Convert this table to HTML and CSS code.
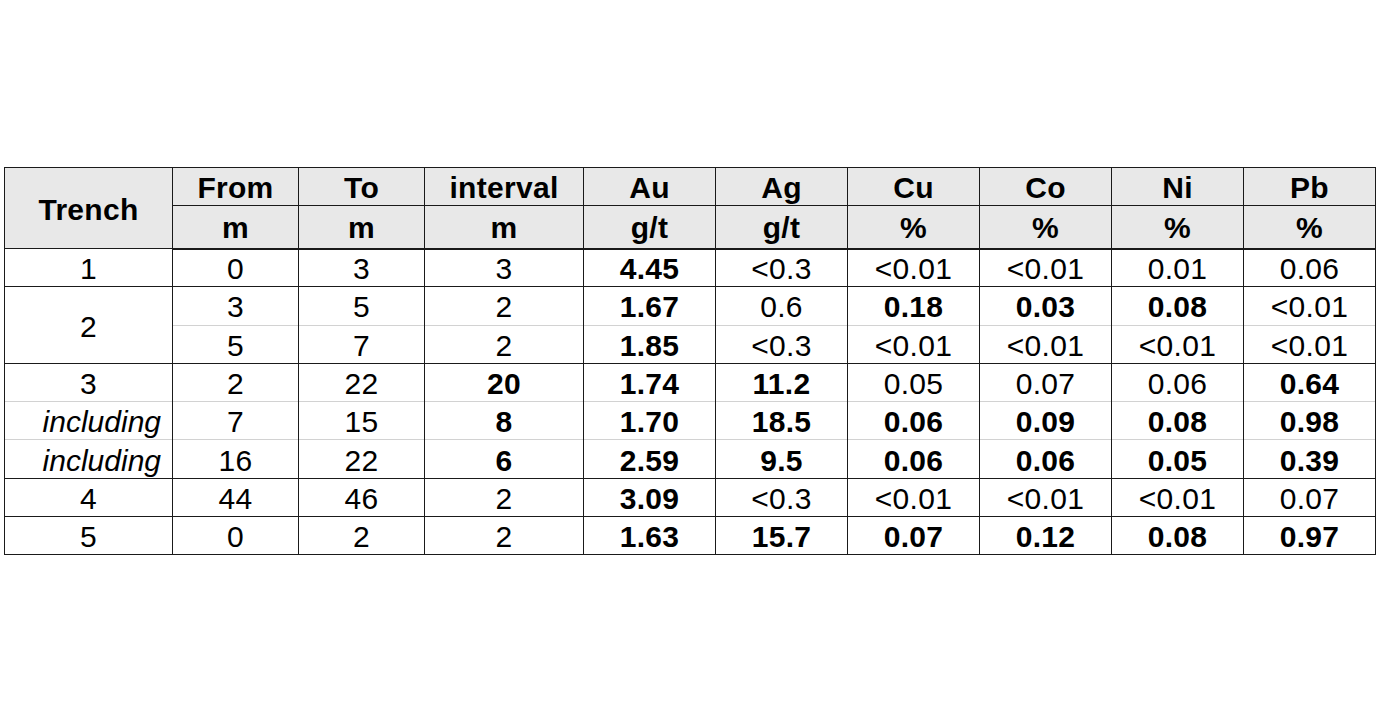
FILE: index.html
```html
<!DOCTYPE html>
<html>
<head>
<meta charset="utf-8">
<link rel="stylesheet" href="styles.css">
</head>
<body>
<div class="page">
<table class="assay">
  <colgroup>
    <col class="c-trench">
    <col class="c-narrow">
    <col class="c-narrow">
    <col class="c-interval">
    <col class="c-val">
    <col class="c-val">
    <col class="c-val">
    <col class="c-val">
    <col class="c-val">
    <col class="c-val">
  </colgroup>
  <thead>
    <tr class="h1">
      <th rowspan="2" class="trench-h">Trench</th>
      <th>From</th><th>To</th><th>interval</th><th>Au</th><th>Ag</th><th>Cu</th><th>Co</th><th>Ni</th><th>Pb</th>
    </tr>
    <tr class="h2">
      <th>m</th><th>m</th><th>m</th><th>g/t</th><th>g/t</th><th>%</th><th>%</th><th>%</th><th>%</th>
    </tr>
  </thead>
  <tbody>
    <tr class="row grp">
      <td>1</td><td>0</td><td>3</td><td>3</td><td class="b">4.45</td><td>&lt;0.3</td><td>&lt;0.01</td><td>&lt;0.01</td><td>0.01</td><td>0.06</td>
    </tr>
    <tr class="row grp">
      <td rowspan="2">2</td><td>3</td><td>5</td><td>2</td><td class="b">1.67</td><td>0.6</td><td class="b">0.18</td><td class="b">0.03</td><td class="b">0.08</td><td>&lt;0.01</td>
    </tr>
    <tr class="row sub">
      <td>5</td><td>7</td><td>2</td><td class="b">1.85</td><td>&lt;0.3</td><td>&lt;0.01</td><td>&lt;0.01</td><td>&lt;0.01</td><td>&lt;0.01</td>
    </tr>
    <tr class="row grp">
      <td>3</td><td>2</td><td>22</td><td class="b">20</td><td class="b">1.74</td><td class="b">11.2</td><td>0.05</td><td>0.07</td><td>0.06</td><td class="b">0.64</td>
    </tr>
    <tr class="row sub">
      <td class="incl">including</td><td>7</td><td>15</td><td class="b">8</td><td class="b">1.70</td><td class="b">18.5</td><td class="b">0.06</td><td class="b">0.09</td><td class="b">0.08</td><td class="b">0.98</td>
    </tr>
    <tr class="row sub">
      <td class="incl">including</td><td>16</td><td>22</td><td class="b">6</td><td class="b">2.59</td><td class="b">9.5</td><td class="b">0.06</td><td class="b">0.06</td><td class="b">0.05</td><td class="b">0.39</td>
    </tr>
    <tr class="row grp">
      <td>4</td><td>44</td><td>46</td><td>2</td><td class="b">3.09</td><td>&lt;0.3</td><td>&lt;0.01</td><td>&lt;0.01</td><td>&lt;0.01</td><td>0.07</td>
    </tr>
    <tr class="row grp">
      <td>5</td><td>0</td><td>2</td><td>2</td><td class="b">1.63</td><td class="b">15.7</td><td class="b">0.07</td><td class="b">0.12</td><td class="b">0.08</td><td class="b">0.97</td>
    </tr>
  </tbody>
</table>
</div>
</body>
</html>
```

FILE: styles.css
```css
html, body {
  margin: 0;
  padding: 0;
  background: #ffffff;
}

.page {
  padding: 167px 0 0 4px;
}

.assay {
  border-collapse: collapse;
  table-layout: fixed;
  width: 1372px;
  font-family: "Liberation Sans", Arial, sans-serif;
  font-size: 30px;
  color: #000;
  border: 1px solid #1a1a1a;
}

.c-trench { width: 168px; }
.c-narrow { width: 126px; }
.c-interval { width: 159px; }
.c-val { width: 132px; }

.assay th,
.assay td {
  border-left: 1px solid #1a1a1a;
  border-right: 1px solid #1a1a1a;
  padding: 3px 0 0 0;
  text-align: center;
  vertical-align: middle;
  line-height: 1;
  letter-spacing: 0.3px;
}

.assay th {
  background: #e8e8e8;
  font-weight: bold;
}

.h1 { height: 38px; }
.h1 th { border-bottom: 1px solid #1a1a1a; }
.h2 { height: 43px; }
.h2 th, .trench-h { border-bottom: 2px solid #1a1a1a; }

.row { height: 38.3px; }
.row.grp td { border-top: 1px solid #1a1a1a; }
.row.sub td { border-top: 1px solid #d2d2d2; }

.b { font-weight: bold; }

.assay td.incl {
  font-style: italic;
  text-align: right;
  padding-right: 11px;
  letter-spacing: 0;
}
```
